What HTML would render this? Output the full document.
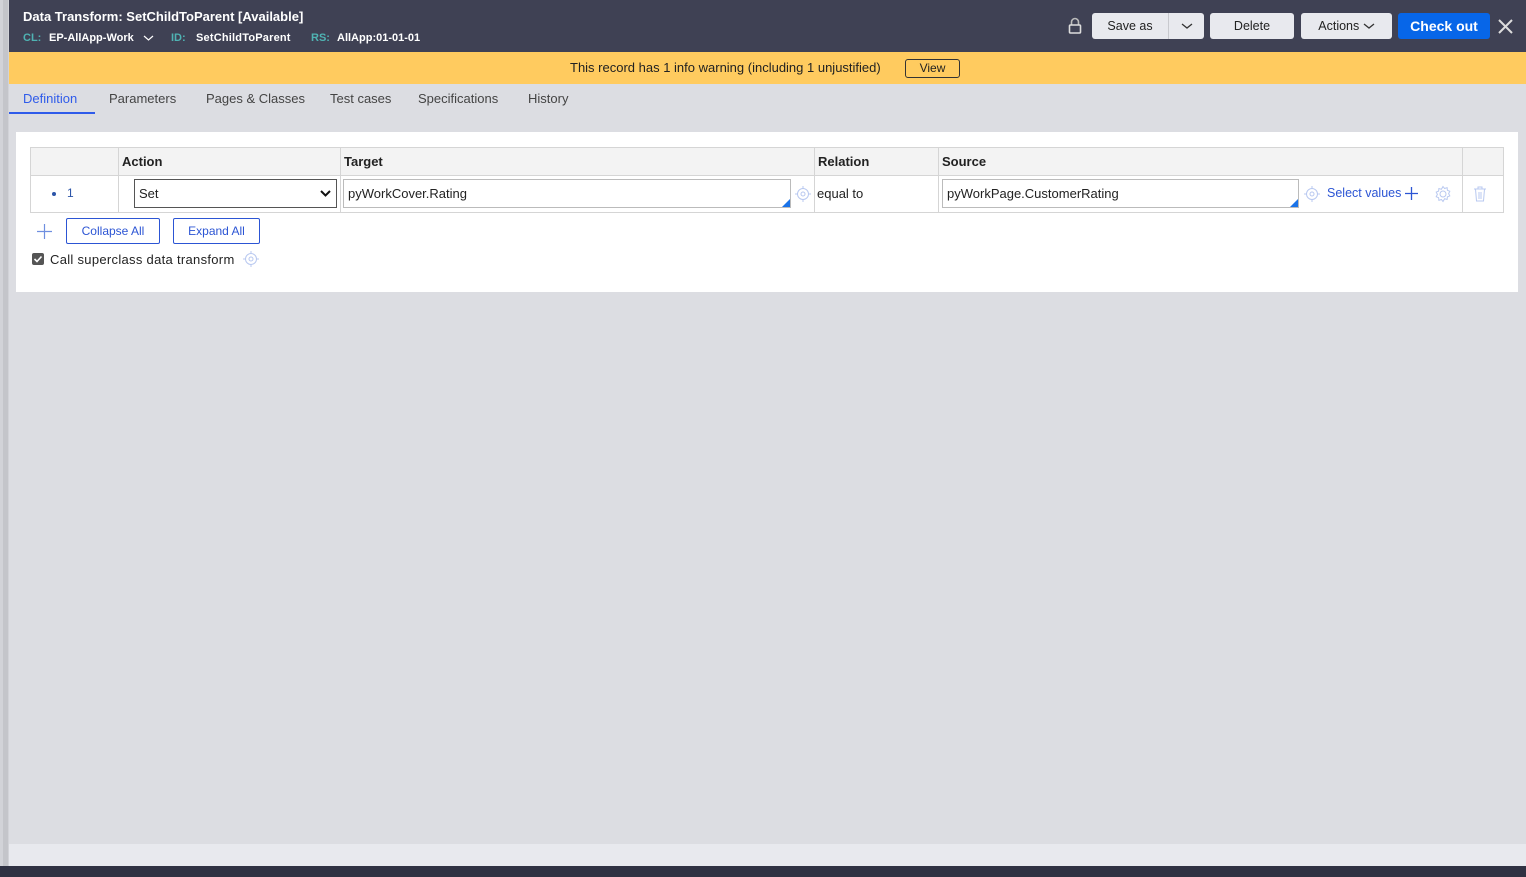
<!DOCTYPE html>
<html><head><meta charset="utf-8"><style>
*{box-sizing:border-box;margin:0;padding:0}
body{width:1526px;height:877px;overflow:hidden;background:#dcdde2;font-family:"Liberation Sans",sans-serif;font-size:13px;color:#222;position:relative}
.a{position:absolute}
.btn{position:absolute;top:13px;height:26px;background:#e8e9ee;border-radius:3px;font-size:12.5px;color:#222;display:flex;align-items:center;justify-content:center}
.th{position:absolute;top:0;height:28px;line-height:28px;padding-left:3px;font-weight:bold;font-size:13px;color:#222;border-right:1px solid #d5d5d5}
.ol{position:absolute;border:1px solid #2c55d4;border-radius:2px;color:#2c55d4;font-size:12px;display:flex;align-items:center;justify-content:center;height:26px;top:218px}
.inp{position:absolute;top:179px;height:29px;border:1px solid #bbb;background:#fff;padding-left:4px;line-height:27px;font-size:13px}
.tri{position:absolute;right:0;bottom:0;width:0;height:0;border-left:8px solid transparent;border-bottom:8px solid #1a73e8}
.sub{position:absolute;top:32px;font-size:11px;font-weight:bold;color:#fff}
.sub.k{color:#4fb3b3}
</style></head><body>
<div class="a" style="left:0;top:0;width:9px;height:877px;background:#d2d3d8"></div>
<div class="a" style="left:3px;top:0;width:5px;height:866px;background:#c4c5ca"></div>
<div class="a" style="left:9px;top:0;width:1517px;height:52px;background:#3f4154"></div>
<div class="a" style="left:23px;top:9px;color:#fff;font-weight:bold;font-size:13px">Data Transform: SetChildToParent [Available]</div>
<div class="sub k" style="left:23px">CL:</div>
<div class="sub" style="left:49px">EP-AllApp-Work</div>
<svg class="a" style="left:143px;top:35px" width="11" height="7"><path d="M1 1l4.5 4L10 1" fill="none" stroke="#fff" stroke-width="1.2"/></svg>
<div class="sub k" style="left:171px">ID:</div>
<div class="sub" style="left:196px;letter-spacing:0.2px">SetChildToParent</div>
<div class="sub k" style="left:311px">RS:</div>
<div class="sub" style="left:337px">AllApp:01-01-01</div>
<svg class="a" style="left:1068px;top:17px" width="14" height="17" viewBox="0 0 14 17"><path d="M3.5 8V5a3.5 3.5 0 0 1 7 0v3" fill="none" stroke="#bbb" stroke-width="1.6"/><rect x="1.5" y="8" width="11" height="8" rx="1" fill="none" stroke="#ddd" stroke-width="1.6"/></svg>
<div class="btn" style="left:1092px;width:76px;border-radius:3px 0 0 3px">Save as</div>
<div class="btn" style="left:1168px;width:36px;border-radius:0 3px 3px 0;border-left:1px solid #c8c9ce"><svg width="12" height="8"><path d="M1 2l5 4 5-4" fill="none" stroke="#333" stroke-width="1.3"/></svg></div>
<div class="btn" style="left:1210px;width:84px">Delete</div>
<div class="btn" style="left:1301px;width:91px">Actions&nbsp;<svg width="12" height="8"><path d="M1 2l5 4 5-4" fill="none" stroke="#333" stroke-width="1.3"/></svg></div>
<div class="btn" style="left:1398px;width:92px;background:#0766e8;color:#fff;font-weight:bold;font-size:14px">Check out</div>
<svg class="a" style="left:1498px;top:19px" width="15" height="15"><path d="M1 1l13 13M14 1L1 14" stroke="#ddd" stroke-width="2"/></svg>
<div class="a" style="left:9px;top:52px;width:1517px;height:32px;background:#ffcb5f"></div>
<div class="a" style="left:570px;top:60px;font-size:13px;color:#222">This record has 1 info warning (including 1 unjustified)</div>
<div class="a" style="left:905px;top:59px;width:55px;height:19px;border:1px solid #333;border-radius:3px;font-size:12px;text-align:center;line-height:17px">View</div>
<div class="a" style="left:23px;top:91px;color:#2f5bea;font-size:13px">Definition</div>
<div class="a" style="left:9px;top:112px;width:86px;height:2px;background:#2f5bea"></div>
<div class="a" style="left:109px;top:91px;color:#444">Parameters</div>
<div class="a" style="left:206px;top:91px;color:#444">Pages &amp; Classes</div>
<div class="a" style="left:330px;top:91px;color:#444">Test cases</div>
<div class="a" style="left:418px;top:91px;color:#444">Specifications</div>
<div class="a" style="left:528px;top:91px;color:#444">History</div>
<div class="a" style="left:16px;top:132px;width:1502px;height:160px;background:#fff"></div>
<div class="a" style="left:30px;top:147px;width:1474px;height:66px;border:1px solid #d5d5d5">
 <div class="a" style="left:0;top:0;width:1472px;height:28px;background:#f3f3f3;border-bottom:1px solid #d5d5d5"></div>
 <div class="th" style="left:0;width:88px"></div>
 <div class="th" style="left:88px;width:222px">Action</div>
 <div class="th" style="left:310px;width:474px">Target</div>
 <div class="th" style="left:784px;width:124px">Relation</div>
 <div class="th" style="left:908px;width:524px">Source</div>
 <div class="a" style="left:87px;top:28px;width:1px;height:36px;background:#d5d5d5"></div>
 <div class="a" style="left:309px;top:28px;width:1px;height:36px;background:#d5d5d5"></div>
 <div class="a" style="left:783px;top:28px;width:1px;height:36px;background:#d5d5d5"></div>
 <div class="a" style="left:907px;top:28px;width:1px;height:36px;background:#d5d5d5"></div>
 <div class="a" style="left:1431px;top:28px;width:1px;height:36px;background:#d5d5d5"></div>
</div>
<div class="a" style="left:52px;top:192px;width:4px;height:4px;border-radius:2px;background:#2c55a8"></div>
<div class="a" style="left:67px;top:186px;color:#2c55a8;font-size:12px">1</div>
<div class="a" style="left:134px;top:179px;width:203px;height:29px;border:1px solid #555;padding-left:4px;line-height:27px">Set<svg style="position:absolute;right:5px;top:10px" width="11" height="8"><path d="M1 1l4.5 4.5L10 1" fill="none" stroke="#111" stroke-width="2"/></svg></div>
<div class="inp" style="left:343px;width:448px">pyWorkCover.Rating<div class="tri"></div></div>
<svg class="a" style="left:795px;top:186px" width="16" height="16"><circle cx="8" cy="8" r="5.5" fill="none" stroke="#b8c8f0"/><circle cx="8" cy="8" r="2" fill="none" stroke="#b8c8f0"/><path d="M8 0v2.5M8 13.5V16M0 8h2.5M13.5 8H16" stroke="#b8c8f0"/></svg>
<div class="a" style="left:817px;top:186px">equal to</div>
<div class="inp" style="left:942px;width:357px">pyWorkPage.CustomerRating<div class="tri"></div></div>
<svg class="a" style="left:1304px;top:186px" width="16" height="16"><circle cx="8" cy="8" r="5.5" fill="none" stroke="#b8c8f0"/><circle cx="8" cy="8" r="2" fill="none" stroke="#b8c8f0"/><path d="M8 0v2.5M8 13.5V16M0 8h2.5M13.5 8H16" stroke="#b8c8f0"/></svg>
<div class="a" style="left:1327px;top:186px;color:#2c55d4;font-size:12.5px">Select values</div>
<svg class="a" style="left:1405px;top:187px" width="13" height="13"><path d="M6.5 0v13M0 6.5h13" stroke="#2c55d4" stroke-width="1.3"/></svg>
<svg class="a" style="left:1434px;top:185px" width="18" height="18" viewBox="0 0 18 18"><circle cx="9" cy="9" r="3" fill="none" stroke="#b8c8f0"/><path d="M9 1.5l1.6 2 2.5-.8.3 2.6 2.4 1-1.2 2.3 1.2 2.3-2.4 1-.3 2.6-2.5-.8L9 16.5l-1.6-2-2.5.8-.3-2.6-2.4-1L3.4 9.4 2.2 7.1l2.4-1 .3-2.6 2.5.8z" fill="none" stroke="#b8c8f0"/></svg>
<svg class="a" style="left:1473px;top:186px" width="14" height="16"><path d="M1 3h12M5 3V1h4v2M2.5 3l1 12h7l1-12M6 6v7M8 6v7" fill="none" stroke="#b8c8f0"/></svg>
<svg class="a" style="left:37px;top:224px" width="15" height="15"><path d="M7.5 0v15M0 7.5h15" stroke="#6f8fe0" stroke-width="1.2"/></svg>
<div class="ol" style="left:66px;width:94px">Collapse All</div>
<div class="ol" style="left:173px;width:87px">Expand All</div>
<div class="a" style="left:32px;top:253px;width:12px;height:12px;background:#555;border-radius:2px"><svg width="12" height="12"><path d="M2.5 6l2.5 2.5L9.5 3.5" fill="none" stroke="#fff" stroke-width="1.6"/></svg></div>
<div class="a" style="left:50px;top:252px;letter-spacing:0.3px">Call superclass data transform</div>
<svg class="a" style="left:243px;top:251px" width="16" height="16"><circle cx="8" cy="8" r="5.5" fill="none" stroke="#b8c8f0"/><circle cx="8" cy="8" r="2" fill="none" stroke="#b8c8f0"/><path d="M8 0v2.5M8 13.5V16M0 8h2.5M13.5 8H16" stroke="#b8c8f0"/></svg>
<div class="a" style="left:9px;top:844px;width:1517px;height:22px;background:#e8e9ee"></div>
<div class="a" style="left:0;top:866px;width:1526px;height:11px;background:#2f3142"></div>
</body></html>
